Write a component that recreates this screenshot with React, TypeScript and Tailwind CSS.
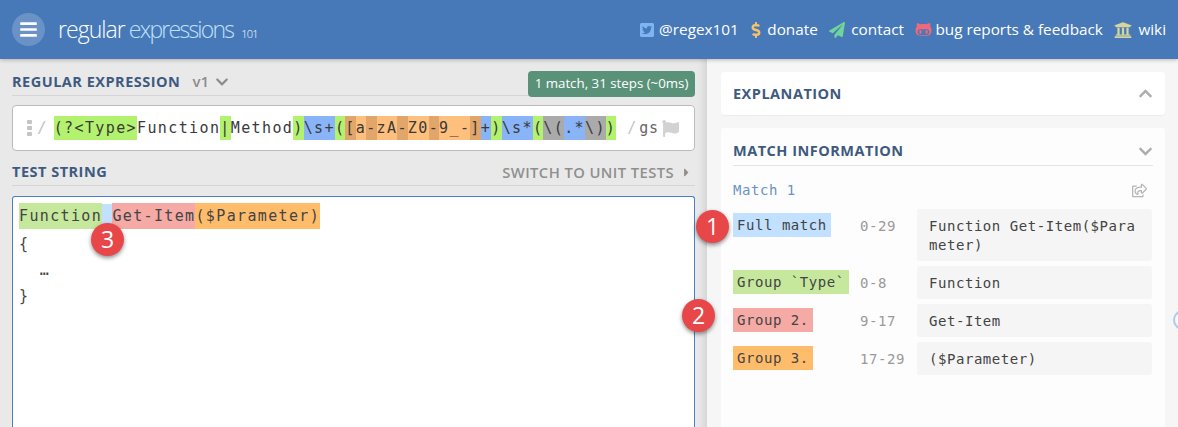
import React from "react";
import {
  FaBars,
  FaCaretRight,
  FaChevronDown,
  FaChevronUp,
  FaDollarSign,
  FaFlag,
  FaGithubAlt,
  FaPaperPlane,
  FaRegShareSquare,
  FaTwitterSquare,
  FaUniversity,
} from "react-icons/fa";

const sans = "font-['Open_Sans',sans-serif]";
const mono = "font-['DejaVu_Sans_Mono',monospace]";

const G = "bg-[#b2f26e]";
const B = "bg-[#8ab4f8]";
const O = "bg-[#ffc07e]";
const D = "bg-[#e2a66a]";
const S = "bg-[#aaaaaa]";

const regexParts: [string, string][] = [
  ["(?<Type>", G],
  ["Function", ""],
  ["|", G],
  ["Method", ""],
  [")", G],
  ["\\s+", B],
  ["(", G],
  ["[", D],
  ["a", O],
  ["-", D],
  ["zA", O],
  ["-", D],
  ["Z0", O],
  ["-", D],
  ["9_-", O],
  ["]", D],
  ["+", B],
  [")", G],
  ["\\s*", B],
  ["(", G],
  ["\\(", S],
  [".*", B],
  ["\\)", S],
  [")", G],
];

const navLinks = [
  { icon: <FaTwitterSquare className="text-[#7db5f0] text-[16px]" />, label: "@regex101", gap: "gap-[4px]" },
  { icon: <FaDollarSign className="ml-[-2px] text-[#f4c26b] text-[16px]" />, label: "donate", gap: "gap-[3px]" },
  { icon: <FaPaperPlane className="text-[#6fd39b] text-[16px]" />, label: "contact", gap: "gap-[6px]" },
  { icon: <FaGithubAlt className="text-[#f0687a] text-[17px]" />, label: "bug reports & feedback", gap: "gap-[3px]" },
  { icon: <FaUniversity className="text-[#d5d69c] text-[18px]" />, label: "wiki", gap: "gap-[6px]" },
];

const matchRows = [
  { label: "Full match", color: "bg-[#c2e0ff]", range: "0-29", value: "Function Get-Item($Parameter)", h: "h-[52px]" },
  { label: "Group `Type`", color: "bg-[#c5e89d]", range: "0-8", value: "Function", h: "h-[33px]" },
  { label: "Group 2.", color: "bg-[#f5aaa6]", range: "9-17", value: "Get-Item", h: "h-[33px]" },
  { label: "Group 3.", color: "bg-[#ffbd6b]", range: "17-29", value: "($Parameter)", h: "h-[33px]" },
];

const Badge = ({ n, pos }: { n: number; pos: string }) => (
  <div
    className={`absolute ${pos} ${sans} flex h-[33px] w-[33px] items-center justify-center rounded-full bg-[#e8474a] text-[23px] text-white shadow-[0_2px_4px_rgba(0,0,0,0.45)]`}
  >
    {n}
  </div>
);

const SectionTitle = ({ children }: { children: React.ReactNode }) => (
  <span className={`${sans} text-[14.5px] font-bold tracking-[0.5px] text-[#3f5a80]`}>{children}</span>
);

export default function App() {
  return (
    <div className={`relative flex h-[427px] w-[1178px] flex-col overflow-hidden ${sans}`}>
      {/* header */}
      <header className="z-10 flex h-[59px] shrink-0 items-center justify-between bg-[#4779b9] pl-3 pr-3 shadow-[0_1px_4px_rgba(0,0,0,0.25)]">
        <div className="flex items-center">
          <div className="flex h-[33px] w-[33px] items-center justify-center rounded-full bg-[#6a92c7] text-[19px] text-white">
            <FaBars />
          </div>
          <div className="ml-[13px] flex items-baseline text-[23px] font-light tracking-[-0.95px]">
            <span className="text-white">regular</span>
            <span className="ml-[4px] tracking-[-1.75px] text-[#bfe0fb]">expressions</span>
            <span className="ml-[8px] text-[11px] tracking-[-0.8px] text-white">101</span>
          </div>
        </div>
        <nav className="flex items-center gap-[11.5px] text-[15.3px] text-white">
          {navLinks.map((l) => (
            <a key={l.label} className={`flex items-center ${l.gap}`}>
              {l.icon}
              {l.label}
            </a>
          ))}
        </nav>
      </header>

      <div className="flex min-h-0 flex-1">
        {/* left column */}
        <div className="flex w-[707px] shrink-0 flex-col bg-[#e9e9e9] pl-3 pr-[12px] shadow-[inset_-10px_0_8px_-8px_rgba(0,0,0,0.12)]">
          <div className="mt-[13px] flex h-[24px] items-center justify-between border-b border-[#d5d5d5] pb-[4px]">
            <div className="flex items-center">
              <SectionTitle>REGULAR EXPRESSION</SectionTitle>
              <span className="ml-[12px] text-[15px] font-semibold text-[#8c8c8c]">v1</span>
              <FaChevronDown className="ml-[6px] text-[14px] text-[#8c8c8c]" />
            </div>
            <div className="mb-[-5px] flex h-[26px] w-[167px] items-center justify-center rounded-[4px] bg-[#5a9279] text-[13.3px] text-white">
              1 match, 31 steps (~0ms)
            </div>
          </div>

          <div className="mt-[9px] flex h-[46px] items-center rounded-[4px] border border-[#bbbbbb] bg-white pl-[14px]">
            <div className="flex flex-col gap-[2px]">
              <i className="h-[4px] w-[5px] rounded-[1px] bg-[#c4c4c4]" />
              <i className="h-[4px] w-[5px] rounded-[1px] bg-[#c4c4c4]" />
              <i className="h-[4px] w-[5px] rounded-[1px] bg-[#c4c4c4]" />
            </div>
            <span className={`${mono} ml-[5px] text-[16px] text-[#c4c4c4]`}>/</span>
            <div className={`${mono} ml-[7px] flex h-[24px] items-center text-[15px] tracking-[1.385px] text-[#3a3a3a]`}>
              {regexParts.map(([t, c], i) => (
                <span key={i} className={`${c} flex h-[24px] items-center whitespace-pre`}>
                  {t}
                </span>
              ))}
            </div>
            <span className={`${mono} ml-[11px] text-[15px] text-[#c4c4c4]`}>/</span>
            <span className={`${mono} ml-[3px] text-[15px] tracking-[0.8px] text-[#666666]`}>gs</span>
            <FaFlag className="ml-[3px] text-[17px] text-[#d2d2d2]" />
          </div>

          <div className="mt-[9px] flex h-[26px] items-center justify-between border-b border-[#d5d5d5] pb-[1px]">
            <SectionTitle>TEST STRING</SectionTitle>
            <div className="flex items-center gap-[6px] text-[14.8px] font-semibold tracking-[0.4px] text-[#8f8f8f]">
              SWITCH TO UNIT TESTS
              <FaCaretRight className="mr-[2px] text-[13px]" />
            </div>
          </div>

          <div
            className={`${mono} mt-[10px] flex-1 rounded-t-[3px] border border-b-0 border-[#4a80c8] bg-white pl-[6px] pt-[7px] text-[15px] leading-[26px] tracking-[1.35px] text-[#444444]`}
          >
            <div className="flex h-[24px] w-fit items-center whitespace-pre bg-[#c2e0ff]">
              <span className="bg-[#c5e89d]">Function</span>
              <span> </span>
              <span className="bg-[#f5aaa6]">Get-Item</span>
              <span className="bg-[#ffbd6b]">($Parameter)</span>
            </div>
            <div className="mt-[3px]">{"{"}</div>
            <div className="whitespace-pre">{"  …"}</div>
            <div>{"}"}</div>
          </div>
        </div>

        {/* right column */}
        <div className="flex flex-1 flex-col gap-[13px] bg-[#f6f6f6] pl-[14px] pr-[13px] pt-[13px]">
          <div className="flex h-[43px] items-center justify-between rounded-[3px] bg-white pl-[12px] pr-[12px] shadow-[0_1px_1px_rgba(0,0,0,0.04)]">
            <SectionTitle>EXPLANATION</SectionTitle>
            <FaChevronUp className="text-[15px] text-[#adadad]" />
          </div>

          <div className="flex-1 rounded-t-[3px] bg-[#fdfdfd] px-[12px]">
            <div className="flex h-[38px] items-end justify-between border-b border-[#e4e4e4] pb-[3px]">
              <SectionTitle>MATCH INFORMATION</SectionTitle>
              <FaChevronDown className="mb-[3px] text-[15px] text-[#adadad]" />
            </div>
            <div className={`${mono} flex h-[43px] items-center justify-between pt-[6px] text-[14px] tracking-[0.55px] text-[#6a93c5]`}>
              Match 1
              <FaRegShareSquare className="mr-[6px] text-[15px] text-[#b5b5b5]" />
            </div>
            <div className={`${mono} flex flex-col gap-[5px] text-[14px] tracking-[0.55px] text-[#444444]`}>
              {matchRows.map((r) => (
                <div key={r.label} className="flex">
                  <div className="w-[127px] shrink-0 pt-[4px]">
                    <span className={`${r.color} inline-block h-[24px] px-[4px] leading-[25px]`}>{r.label}</span>
                  </div>
                  <div className="w-[57px] shrink-0 pt-[7px] leading-[20px] text-[#999999]">{r.range}</div>
                  <div className={`${r.h} w-[235px] shrink-0 break-all rounded-[3px] bg-[#f5f5f5] px-[12px] pt-[8px] leading-[19px]`}>
                    {r.value}
                  </div>
                </div>
              ))}
            </div>
          </div>
        </div>
      </div>

      {/* annotation badges over the page */}
      <Badge n={3} pos="left-[91px] top-[223px]" />
      <Badge n={1} pos="left-[696px] top-[210px]" />
      <Badge n={2} pos="left-[682px] top-[299px]" />
      <div className="absolute left-[1173px] top-[310px] h-[20px] w-[20px] rounded-full border-2 border-[#a9cdea]" />
    </div>
  );
}
